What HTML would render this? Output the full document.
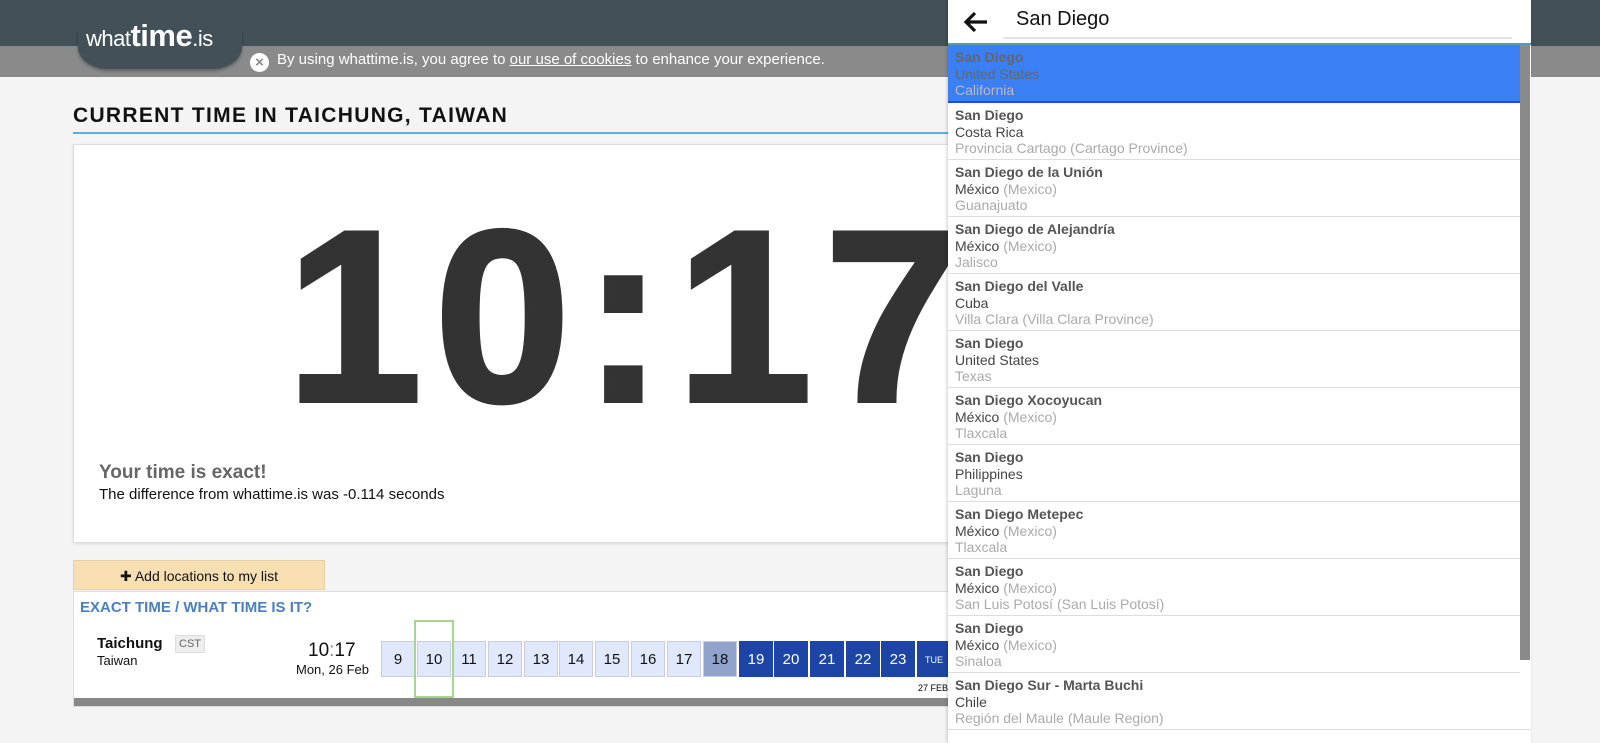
<!DOCTYPE html>
<html><head><meta charset="utf-8"><style>
*{box-sizing:border-box;margin:0;padding:0}
body{width:1600px;height:743px;overflow:hidden;background:#f4f4f4;font-family:"Liberation Sans",sans-serif;position:relative}
.hdr{position:absolute;left:0;top:0;width:1600px;height:46px;background:#435058}
.band{position:absolute;left:0;top:46px;width:1600px;height:31px;background:#8a8a8a}
.tab{position:absolute;left:78px;top:30px;width:164px;height:39px;background:#435058;border-radius:0 0 30px 30px/0 0 22px 22px;box-shadow:0 2px 3px rgba(0,0,0,.3)}
.logo{position:absolute;left:86px;top:18px;color:#fff;font-size:22px;letter-spacing:-.5px}
.logo b{font-size:31px}
.cookie{position:absolute;left:250px;top:51px;color:#fff;font-size:15px}
.cookie .x{display:inline-block;width:19px;height:19px;border-radius:50%;background:#fff;color:#8a8a8a;text-align:center;font-weight:bold;font-size:15px;line-height:19px;margin-right:8px;vertical-align:-3px}
h1{position:absolute;left:73px;top:104px;font-size:21px;font-weight:bold;color:#111;letter-spacing:1.3px}
.hl{position:absolute;left:73px;top:132px;width:900px;height:2px;background:#5ab0e0}
.box{position:absolute;left:73px;top:144px;width:900px;height:399px;background:#fff;border:1px solid #ddd;box-shadow:0 1px 3px rgba(0,0,0,.1)}
.clock{position:absolute;left:286px;top:194px;font-size:245px;line-height:1;font-weight:bold;color:#333;letter-spacing:12px;-webkit-text-stroke:4px #333}
.exact{position:absolute;left:99px;top:462px;font-size:19px;font-weight:bold;color:#666}
.diff{position:absolute;left:99px;top:486px;font-size:15px;color:#111}
.add{position:absolute;left:73px;top:560px;width:252px;height:30px;background:#f7dfb3;border:1px solid #e4d0a8;font-size:14px;text-align:center;line-height:30px;color:#111}
.tz{position:absolute;left:73px;top:591px;width:900px;height:116px;background:#fff;border:1px solid #ddd}
.tz .t{position:absolute;left:6px;top:7px;color:#4a7fbf;font-weight:bold;font-size:15px}
.tz .bar{position:absolute;left:0;bottom:0;width:100%;height:8px;background:#888}
.city{position:absolute;left:97px;top:635px;font-weight:bold;font-size:15px;color:#111}
.cst{position:absolute;left:175px;top:635px;font-size:11px;color:#666;background:#eee;border:1px solid #ddd;padding:2px 3px}
.ctry{position:absolute;left:97px;top:653px;font-size:13px;color:#111}
.tm{position:absolute;left:308px;top:640px;font-size:19px;color:#111}
.dt{position:absolute;left:296px;top:662px;font-size:13px;color:#111}
.cell{position:absolute;top:641px;width:34px;height:36px;background:#dfe9fb;border:1px solid #ccd;font-size:15px;text-align:center;line-height:36px;color:#111}
.cell.g{background:#8fa3cc}
.cell.d{background:#1c45a6;color:#fff;border-color:#1c45a6}
.sel{position:absolute;left:414px;top:620px;width:40px;height:78px;border:2px solid #a6d68c}
.dd{position:absolute;left:948px;top:0;width:583px;height:743px;background:#fff;box-shadow:-1px 0 3px rgba(0,0,0,.2)}
.inp{position:absolute;left:1016px;top:8px;font-size:20px;color:#111}
.inl{position:absolute;left:1003px;top:37px;width:509px;height:2px;background:#e3e3e3}
.arr{position:absolute;left:962px;top:10px}
.topl{position:absolute;left:948px;top:43px;width:583px;height:2px;background:#5a9ab0}
.sb{position:absolute;left:1520px;top:45px;width:10px;height:615px;background:#8a8a8a}
.it{position:absolute;left:948px;width:572px;height:57px;border-bottom:1px solid #ddd;padding:4px 0 0 7px;font-size:14px;line-height:16.5px}
.it b{color:#555;display:block}
.it .c{color:#444}
.it .c span,.it .r{color:#aaa}
.it.a{background:#3b7ff5;border-bottom:2px solid #1a4ee0}
.it.a b,.it.a .c{color:#666}
.it.a .r{color:#bbb}
</style></head><body>
<div class="hdr"></div><div class="band"></div>
<div class="tab"></div>
<div class="logo">what<b>time</b>.is</div>
<div class="cookie"><span class="x">×</span>By using whattime.is, you agree to <u>our use of cookies</u> to enhance your experience.</div>
<h1>CURRENT TIME IN TAICHUNG, TAIWAN</h1>
<div class="hl"></div>
<div class="box"></div>
<div class="clock">10:17</div>
<div class="exact">Your time is exact!</div>
<div class="diff">The difference from whattime.is was -0.114 seconds</div>
<div class="add">✚ Add locations to my list</div>
<div class="tz"><div class="t">EXACT TIME / WHAT TIME IS IT?</div><div class="bar"></div></div>
<div class="city">Taichung</div><div class="cst">CST</div><div class="ctry">Taiwan</div>
<div class="tm">10<span style="color:#888">:</span>17</div><div class="dt">Mon, 26 Feb</div>
<div class="cell" style="left:381px">9</div>
<div class="cell" style="left:417px">10</div>
<div class="cell" style="left:452px">11</div>
<div class="cell" style="left:488px">12</div>
<div class="cell" style="left:524px">13</div>
<div class="cell" style="left:559px">14</div>
<div class="cell" style="left:595px">15</div>
<div class="cell" style="left:631px">16</div>
<div class="cell" style="left:667px">17</div>
<div class="cell g" style="left:703px">18</div>
<div class="cell d" style="left:739px">19</div>
<div class="cell d" style="left:774px">20</div>
<div class="cell d" style="left:810px">21</div>
<div class="cell d" style="left:846px">22</div>
<div class="cell d" style="left:881px">23</div>
<div class="cell d" style="left:917px;font-size:9px">TUE</div>
<div style="position:absolute;left:918px;top:683px;font-size:9px">27 FEB</div>
<div class="sel"></div>
<div class="dd"></div>
<svg class="arr" width="28" height="24" viewBox="0 0 28 24"><path d="M25 12H4M13 3L4 12l9 9" stroke="#111" stroke-width="3.2" fill="none"/></svg>
<div class="inp">San Diego</div><div class="inl"></div>
<div class="topl"></div>
<div class="it a" style="top:45px;height:58px"><b>San Diego</b><div class="c">United States</div><div class="r">California</div></div>
<div class="it" style="top:103px"><b>San Diego</b><div class="c">Costa Rica</div><div class="r">Provincia Cartago (Cartago Province)</div></div>
<div class="it" style="top:160px"><b>San Diego de la Unión</b><div class="c">México <span>(Mexico)</span></div><div class="r">Guanajuato</div></div>
<div class="it" style="top:217px"><b>San Diego de Alejandría</b><div class="c">México <span>(Mexico)</span></div><div class="r">Jalisco</div></div>
<div class="it" style="top:274px"><b>San Diego del Valle</b><div class="c">Cuba</div><div class="r">Villa Clara (Villa Clara Province)</div></div>
<div class="it" style="top:331px"><b>San Diego</b><div class="c">United States</div><div class="r">Texas</div></div>
<div class="it" style="top:388px"><b>San Diego Xocoyucan</b><div class="c">México <span>(Mexico)</span></div><div class="r">Tlaxcala</div></div>
<div class="it" style="top:445px"><b>San Diego</b><div class="c">Philippines</div><div class="r">Laguna</div></div>
<div class="it" style="top:502px"><b>San Diego Metepec</b><div class="c">México <span>(Mexico)</span></div><div class="r">Tlaxcala</div></div>
<div class="it" style="top:559px"><b>San Diego</b><div class="c">México <span>(Mexico)</span></div><div class="r">San Luis Potosí (San Luis Potosí)</div></div>
<div class="it" style="top:616px"><b>San Diego</b><div class="c">México <span>(Mexico)</span></div><div class="r">Sinaloa</div></div>
<div class="it" style="top:673px;width:583px"><b>San Diego Sur - Marta Buchi</b><div class="c">Chile</div><div class="r">Región del Maule (Maule Region)</div></div>
<div class="sb"></div>
</body></html>
